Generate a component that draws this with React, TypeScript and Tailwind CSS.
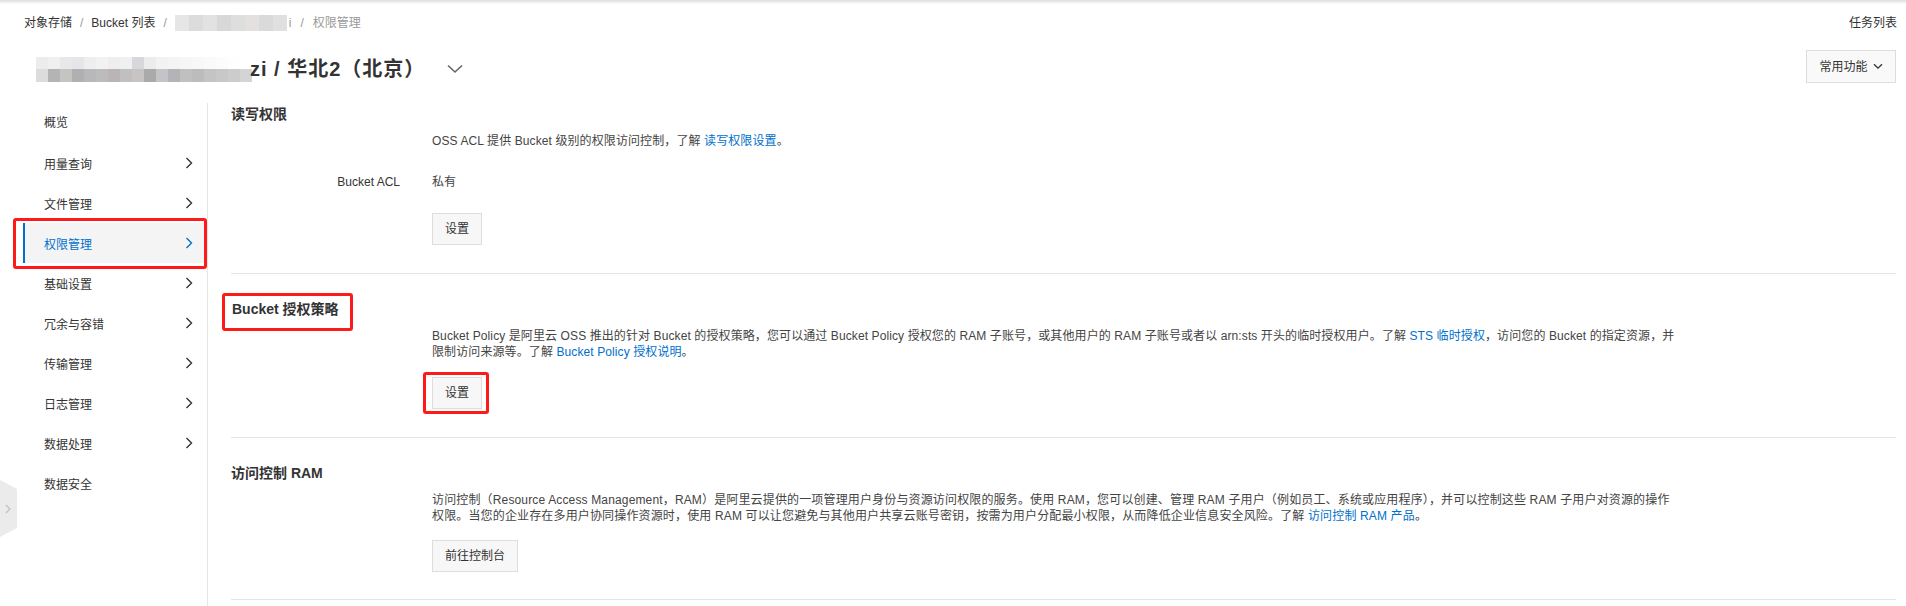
import React from 'react'

const menu = [
  { label: '概览', arrow: false },
  { label: '用量查询', arrow: true },
  { label: '文件管理', arrow: true },
  { label: '权限管理', arrow: true, active: true },
  { label: '基础设置', arrow: true },
  { label: '冗余与容错', arrow: true },
  { label: '传输管理', arrow: true },
  { label: '日志管理', arrow: true },
  { label: '数据处理', arrow: true },
  { label: '数据安全', arrow: false },
]

// pixelated blur blocks standing in for the masked bucket name
const crumbBlur = ['#e6e6e6', '#dcdcdc', '#e2e2e2', '#d8d8d8', '#dedede', '#e4e0e0', '#dadada', '#e0e0e0']
const titleTop = ['#ececec', '#f0f0f0', '#e8e8e8', '#e4e6ea', '#eeeeee', '#f2f2f4', '#eeeeee', '#f0f0f0', '#d8d8dc', '#ececec', '#f2f2f2', '#f4f4f4', '#f6f6f6', '#f8f8f8', '#fafafa', '#fcfcfc', '#fefefe', '#ffffff']
const titleBottom = ['#dcdcdc', '#b4b4b4', '#c6c4c0', '#b0b0b0', '#b8b8bc', '#bcbcbc', '#bab4b4', '#c0c0c0', '#c8c4c4', '#aaaaaa', '#c2c4c8', '#b4b4b8', '#c0c0c0', '#bcbcbc', '#c4c4c4', '#c8c8c8', '#cccccc', '#d4d4d4']

function Chevron({ className = '' }: { className?: string }) {
  return (
    <svg width="8" height="12" viewBox="0 0 8 12" fill="none" className={className}>
      <path d="M1.5 1 L6.5 6 L1.5 11" stroke="currentColor" strokeWidth="1.4" />
    </svg>
  )
}

function Button({ children }: { children: React.ReactNode }) {
  return (
    <button className="h-[32px] px-[12px] border border-[#dddddd] bg-[#f7f7f7] text-[12px] text-[#333]">
      {children}
    </button>
  )
}

function Link({ children }: { children: React.ReactNode }) {
  return <span className="text-[#0070cc]">{children}</span>
}

export default function App() {
  return (
    <div className="w-[1906px] h-[606px] overflow-hidden bg-white relative font-['Liberation_Sans','Noto_Sans_CJK_SC',sans-serif] text-[#333]">
      <div className="h-[4px] bg-linear-to-b from-[#dcdcdc] to-white" />

      {/* breadcrumb */}
      <div className="h-[38px] flex items-center justify-between pl-[24px] pr-[9px] text-[12px]">
        <div className="flex items-center">
          <span>对象存储</span>
          <span className="mx-[8px] text-[#999]">/</span>
          <span>Bucket 列表</span>
          <span className="mx-[8px] text-[#999]">/</span>
          <div className="flex h-[16px]">
            {crumbBlur.map((c, i) => (
              <div key={i} className="w-[14px] h-[16px]" style={{ background: c }} />
            ))}
          </div>
          <span className="text-[#999] ml-[2px]">i</span>
          <span className="mx-[9px] text-[#999]">/</span>
          <span className="text-[#999]">权限管理</span>
        </div>
        <span>任务列表</span>
      </div>

      {/* title row */}
      <div className="h-[61px] flex items-start justify-between pl-[36px] pr-[10px]">
        <div className="flex items-center mt-[14px] h-[26px]">
          <div className="flex flex-col">
            <div className="flex">
              {titleTop.map((c, i) => (
                <div key={i} className="w-[12px] h-[12px]" style={{ background: c }} />
              ))}
            </div>
            <div className="flex">
              {titleBottom.map((c, i) => (
                <div key={i} className="w-[12px] h-[13px]" style={{ background: c }} />
              ))}
            </div>
          </div>
          <span className="text-[20px] font-bold leading-[26px] tracking-[1px] ml-[-2px]">zi / 华北2（北京）</span>
          <svg width="16" height="10" viewBox="0 0 16 10" fill="none" className="ml-[22px] text-[#666]">
            <path d="M1 1.5 L8 8 L15 1.5" stroke="currentColor" strokeWidth="1.6" />
          </svg>
        </div>
        <button className="mt-[8px] w-[90px] h-[33px] border border-[#dddddd] bg-[#f9f9f9] text-[12px] text-[#333] flex items-center justify-center gap-[5px]">
          常用功能
          <svg width="10" height="7" viewBox="0 0 10 7" fill="none">
            <path d="M1 1.2 L5 5.2 L9 1.2" stroke="#333" strokeWidth="1.3" />
          </svg>
        </button>
      </div>

      {/* body */}
      <div className="flex h-[503px]">
        <aside className="w-[208px] shrink-0 border-r border-[#e5e5e5] text-[12px]">
          {menu.map((m, i) => (
            <div
              key={m.label}
              className={`relative ml-[23px] w-[182px] h-[40px] flex items-center justify-between pl-[21px] pr-[12px] ${
                m.active ? 'bg-[#f4f4f4] text-[#0070cc] border-l-2 border-[#0070cc]' : ''
              }`}
            >
              <span className={`${m.active ? 'ml-[-2px]' : ''} ${i > 0 ? 'pt-[4px]' : ''}`}>{m.label}</span>
              {m.arrow && <Chevron className={m.active ? 'text-[#0070cc]' : 'text-[#333]'} />}
              {m.active && (
                <div className="absolute left-[-12px] top-[-5px] w-[194px] h-[51px] border-[3px] border-[#ff1a1a] rounded-[3px]" />
              )}
            </div>
          ))}
        </aside>

        <main className="flex-1 pl-[23px] pr-[10px]">
          {/* 读写权限 */}
          <section className="border-b border-[#e5e5e5] pt-[1px] pb-[28px]">
            <h3 className="text-[14px] font-bold leading-[20px]">读写权限</h3>
            <div className="mt-[9px] flex text-[12px] leading-[16px]">
              <div className="w-[201px] shrink-0" />
              <p className="text-[#444] tracking-[0.1px]">
                OSS ACL 提供 Bucket 级别的权限访问控制，了解 <Link>读写权限设置</Link>。
              </p>
            </div>
            <div className="mt-[25px] flex text-[12px] leading-[16px]">
              <div className="w-[201px] shrink-0 text-right pr-[32px]">Bucket ACL</div>
              <span className="text-[#444]">私有</span>
            </div>
            <div className="mt-[23px] flex">
              <div className="w-[201px] shrink-0" />
              <Button>设置</Button>
            </div>
          </section>

          {/* Bucket 授权策略 */}
          <section className="border-b border-[#e5e5e5] pt-[25px] pb-[28px]">
            <div className="relative w-fit ml-[1px]">
              <h3 className="text-[14px] font-bold leading-[20px]">Bucket 授权策略</h3>
              <div className="absolute left-[-10px] top-[-6px] w-[131px] h-[38px] border-[3px] border-[#ff1a1a] rounded-[3px]" />
            </div>
            <div className="mt-[9px] flex text-[12px] leading-[16px]">
              <div className="w-[201px] shrink-0" />
              <p className="text-[#444] whitespace-nowrap tracking-[0.1px]">
                Bucket Policy 是阿里云 OSS 推出的针对 Bucket 的授权策略，您可以通过 Bucket Policy 授权您的 RAM 子账号，或其他用户的 RAM 子账号或者以 arn:sts 开头的临时授权用户。了解 <Link>STS 临时授权</Link>，访问您的 Bucket 的指定资源，并
                <br />
                限制访问来源等。了解 <Link>Bucket Policy 授权说明</Link>。
              </p>
            </div>
            <div className="mt-[17px] flex">
              <div className="w-[201px] shrink-0" />
              <div className="relative">
                <Button>设置</Button>
                <div className="absolute left-[-9px] top-[-5px] w-[66px] h-[42px] border-[3px] border-[#ff1a1a] rounded-[3px]" />
              </div>
            </div>
          </section>

          {/* 访问控制 RAM */}
          <section className="border-b border-[#e5e5e5] pt-[25px] pb-[27px]">
            <h3 className="text-[14px] font-bold leading-[20px]">访问控制 RAM</h3>
            <div className="mt-[9px] flex text-[12px] leading-[16px]">
              <div className="w-[201px] shrink-0" />
              <p className="text-[#444] whitespace-nowrap tracking-[0.15px]">
                访问控制（Resource Access Management，RAM）是阿里云提供的一项管理用户身份与资源访问权限的服务。使用 RAM，您可以创建、管理 RAM 子用户（例如员工、系统或应用程序），并可以控制这些 RAM 子用户对资源的操作
                <br />
                权限。当您的企业存在多用户协同操作资源时，使用 RAM 可以让您避免与其他用户共享云账号密钥，按需为用户分配最小权限，从而降低企业信息安全风险。了解 <Link>访问控制 RAM 产品</Link>。
              </p>
            </div>
            <div className="mt-[16px] flex">
              <div className="w-[201px] shrink-0" />
              <Button>前往控制台</Button>
            </div>
          </section>
        </main>
      </div>

      {/* collapse tab */}
      <div className="absolute left-0 top-[480px] w-[17px] h-[57px] bg-[#ebebeb] [clip-path:polygon(0_0,100%_16%,100%_84%,0_100%)] flex items-center justify-center">
        <svg width="6" height="10" viewBox="0 0 6 10" fill="none" className="ml-[-2px]">
          <path d="M1 1 L5 5 L1 9" stroke="#c0c0c0" strokeWidth="1.2" />
        </svg>
      </div>
    </div>
  )
}
